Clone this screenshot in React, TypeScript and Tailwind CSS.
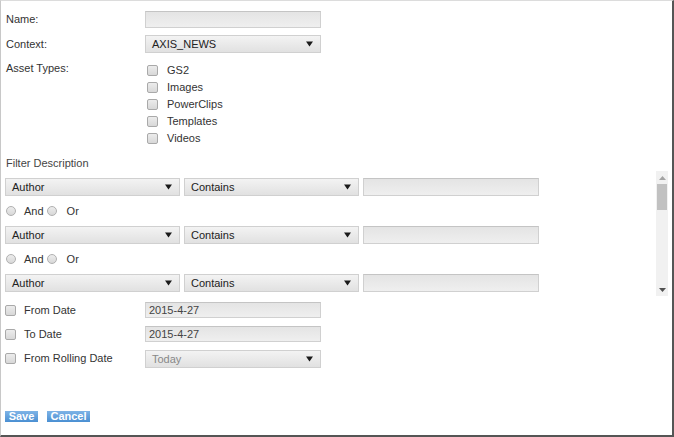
import React from "react";

const Arrow = () => (
  <svg width="7" height="6" viewBox="0 0 7 6" className="shrink-0">
    <path d="M0 0.5 H7 L3.5 5.5 Z" fill="#1a1a1a" />
  </svg>
);

const Select = ({ text, w, h = "h-[18px]", muted = false }: { text: string; w: string; h?: string; muted?: boolean }) => (
  <div
    className={`${w} ${h} flex items-center justify-between pl-[6px] pr-[7px] border border-[#d0d0d0] bg-gradient-to-b from-[#f3f3f3] to-[#e1e1e1] ${muted ? "text-[#888]" : "text-[#222]"}`}
  >
    <span>{text}</span>
    <Arrow />
  </div>
);

const Input = ({ w, h = "h-[17px]", value }: { w: string; h?: string; value?: string }) => (
  <div
    className={`${w} ${h} flex items-center pl-[3px] border border-[#d0d0d0] border-t-[#c4c4c4] bg-gradient-to-b from-[#e4e4e4] to-[#efefef] text-[#444]`}
  >
    {value}
  </div>
);

const Checkbox = () => (
  <div className="w-[11px] h-[11px] rounded-[2px] border border-[#a9a9a9] bg-gradient-to-b from-[#ececec] to-[#d8d8d8] shrink-0" />
);

const Radio = () => (
  <div className="w-[10px] h-[10px] rounded-full border border-[#b0b0b0] bg-gradient-to-b from-[#ececec] to-[#d8d8d8] shrink-0" />
);

const FilterRow = () => (
  <div className="flex gap-[4px] h-[18px]">
    <Select text="Author" w="w-[175px]" />
    <Select text="Contains" w="w-[175px]" />
    <Input w="w-[176px]" h="h-[18px]" />
  </div>
);

const AndOr = () => (
  <div className="h-[30px] flex items-center pl-[1px]">
    <Radio />
    <span className="ml-[8px]">And</span>
    <span className="ml-[3px]"><Radio /></span>
    <span className="ml-[10px]">Or</span>
  </div>
);

export default function App() {
  return (
    <div className="w-[674px] h-[437px] bg-white border-t border-l border-t-[#dcdcdc] border-l-[#c8c8c8] border-r-2 border-b-2 border-r-[#555] border-b-[#555] font-['Arial','Liberation_Sans',sans-serif] text-[11px] text-[#333] flex flex-col overflow-hidden">
      <div className="pl-[5px] flex flex-col">
        <div className="mt-[10px] h-[17px] flex items-center">
          <div className="w-[139px]">Name:</div>
          <Input w="w-[176px]" />
        </div>
        <div className="mt-[7px] h-[18px] flex items-center">
          <div className="w-[139px]">Context:</div>
          <Select text="AXIS_NEWS" w="w-[176px]" />
        </div>
        <div className="mt-[9px] flex">
          <div className="w-[139px] leading-[13px]">Asset Types:</div>
          <div className="flex flex-col">
            {["GS2", "Images", "PowerClips", "Templates", "Videos"].map((t) => (
              <div key={t} className="h-[17px] flex items-center pl-[2px]">
                <Checkbox />
                <span className="ml-[9px]">{t}</span>
              </div>
            ))}
          </div>
        </div>
        <div className="mt-[8px] h-[16px] flex items-center text-[#444]">Filter Description</div>
      </div>

      <div className="h-[125px] flex">
        <div className="flex-1 overflow-hidden pl-[4px] pt-[7px]">
          <FilterRow />
          <AndOr />
          <FilterRow />
          <AndOr />
          <FilterRow />
          <div className="h-[60px]" />
        </div>
        <div className="w-[12px] mr-[4px] bg-[#f1f1f1] flex flex-col items-center">
          <div className="h-[13px] flex items-center justify-center">
            <svg width="7" height="4" viewBox="0 0 7 4"><path d="M0 4 L3.5 0 L7 4 Z" fill="#a3a3a3" /></svg>
          </div>
          <div className="w-[10px] h-[26px] bg-[#c1c1c1]" />
          <div className="flex-1" />
          <div className="h-[13px] flex items-center justify-center">
            <svg width="7" height="4" viewBox="0 0 7 4"><path d="M0 0 L7 0 L3.5 4 Z" fill="#505050" /></svg>
          </div>
        </div>
      </div>

      <div className="pl-[4px] flex flex-col">
        <div className="mt-[6px] h-[16px] flex items-center">
          <div className="w-[140px] flex items-center">
            <Checkbox />
            <span className="ml-[8px]">From Date</span>
          </div>
          <Input w="w-[176px]" h="h-[16px]" value="2015-4-27" />
        </div>
        <div className="mt-[8px] h-[16px] flex items-center">
          <div className="w-[140px] flex items-center">
            <Checkbox />
            <span className="ml-[8px]">To Date</span>
          </div>
          <Input w="w-[176px]" h="h-[16px]" value="2015-4-27" />
        </div>
        <div className="mt-[8px] h-[18px] flex items-start">
          <div className="w-[140px] h-[16px] flex items-center">
            <Checkbox />
            <span className="ml-[8px]">From Rolling Date</span>
          </div>
          <Select text="Today" w="w-[176px]" muted />
        </div>
        <div className="mt-[43px] flex gap-[9px]">
          <div className="w-[33px] h-[11px] flex items-center justify-center bg-gradient-to-b from-[#7db3e6] to-[#4a8fd2] text-white font-bold text-[11px] leading-none">Save</div>
          <div className="w-[43px] h-[11px] flex items-center justify-center bg-gradient-to-b from-[#7db3e6] to-[#4a8fd2] text-white font-bold text-[11px] leading-none">Cancel</div>
        </div>
      </div>
    </div>
  );
}
